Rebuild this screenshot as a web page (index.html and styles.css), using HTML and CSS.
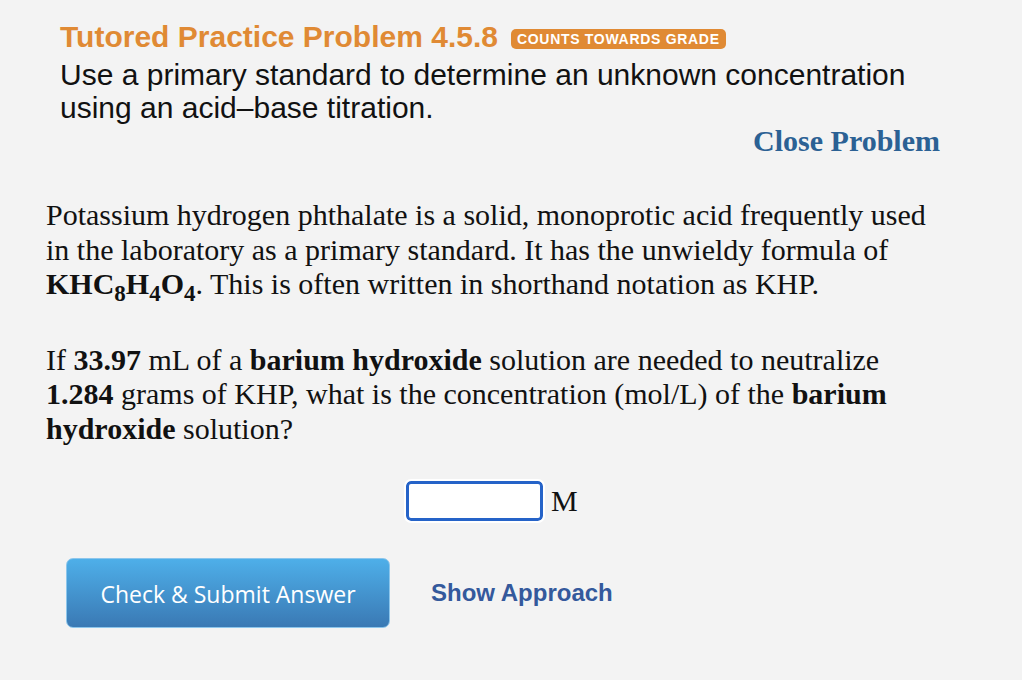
FILE: index.html
```html
<!DOCTYPE html>
<html lang="en">
<head>
    <meta charset="UTF-8">
    <title>Tutored Practice Problem 4.5.8</title>
    <link rel="stylesheet" href="styles.css">
</head>
<body>
    <div class="problem">
        <div class="problem-header">
            <h1 class="problem-title">Tutored Practice Problem 4.5.8 <span class="grade-badge">COUNTS TOWARDS GRADE</span></h1>
            <p class="problem-goal">Use a primary standard to determine an unknown concentration using an acid&ndash;base titration.</p>
        </div>
        <div class="close-row">
            <a href="#" class="close-link">Close Problem</a>
        </div>

        <div class="problem-body">
            <p>Potassium hydrogen phthalate is a solid, monoprotic acid frequently used in the laboratory as a primary standard. It has the unwieldy formula of <b>KHC<sub>8</sub>H<sub>4</sub>O<sub>4</sub></b>. This is often written in shorthand notation as KHP.</p>
            <p>If <b>33.97</b> mL of a <b>barium hydroxide</b> solution are needed to neutralize <b>1.284</b> grams of KHP, what is the concentration (mol/L) of the <b>barium hydroxide</b> solution?</p>

            <div class="answer-row">
                <input type="text" class="answer-input">
                <span class="answer-unit">M</span>
            </div>
        </div>

        <div class="actions">
            <button class="submit-btn">Check &amp; Submit Answer</button>
            <a href="#" class="approach-link">Show Approach</a>
        </div>
    </div>
</body>
</html>
```

FILE: styles.css
```css
body {
    margin: 0;
    background: #f3f3f3;
    font-family: "Liberation Serif", "Times New Roman", serif;
    color: #111;
}

.problem {
    width: 1022px;
    padding-top: 20px;
}

/* Header */
.problem-header {
    padding-left: 60px;
}

.problem-title {
    margin: 0;
    font-family: "Liberation Sans", Arial, sans-serif;
    font-size: 30px;
    line-height: 33px;
    font-weight: bold;
    color: #e08a34;
    display: flex;
    align-items: center;
    gap: 13px;
}

.grade-badge {
    display: inline-block;
    background: #e08a34;
    color: white;
    font-size: 14px;
    line-height: 20px;
    padding: 0 6px;
    border-radius: 5px;
    letter-spacing: 0.7px;
    margin-top: 5px;
}

.problem-goal {
    margin: 5px 0 0;
    width: 870px;
    font-family: "Liberation Sans", Arial, sans-serif;
    font-size: 30px;
    line-height: 33px;
    color: #111;
}

.close-row {
    display: flex;
    justify-content: flex-end;
    padding-right: 82px;
    line-height: 34px;
}

.close-link {
    font-size: 30px;
    font-weight: bold;
    color: #2b6194;
    text-decoration: none;
}

/* Body */
.problem-body {
    padding-left: 46px;
    margin-top: 40px;
}

.problem-body p {
    width: 892px;
    margin: 0 0 41px;
    font-size: 30px;
    line-height: 34.5px;
}

.problem-body sub {
    font-size: 23px;
    line-height: 0;
    vertical-align: -7px;
}

.answer-row {
    display: flex;
    align-items: center;
    gap: 8px;
    padding-left: 360px;
    margin-top: -6px;
}

.answer-input {
    width: 131px;
    height: 34px;
    box-sizing: content-box;
    padding: 0;
    border: 3px solid #2563c8;
    border-radius: 5px;
    background: white;
    outline: 2px solid #fff;
}

.answer-unit {
    font-size: 30px;
}

/* Actions */
.actions {
    display: flex;
    align-items: center;
    gap: 41px;
    padding-left: 66px;
    margin-top: 37px;
}

.submit-btn {
    width: 324px;
    height: 70px;
    padding-top: 3px;
    border: 1px solid #8cc6ec;
    border-radius: 7px;
    background: linear-gradient(to bottom, #4eafe9, #3a79b4);
    color: white;
    font-family: "Open Sans", "Liberation Sans", sans-serif;
    font-size: 23px;
    letter-spacing: 0;
}

.approach-link {
    font-family: "Liberation Sans", Arial, sans-serif;
    font-size: 24px;
    font-weight: bold;
    color: #34599c;
    text-decoration: none;
}
```
